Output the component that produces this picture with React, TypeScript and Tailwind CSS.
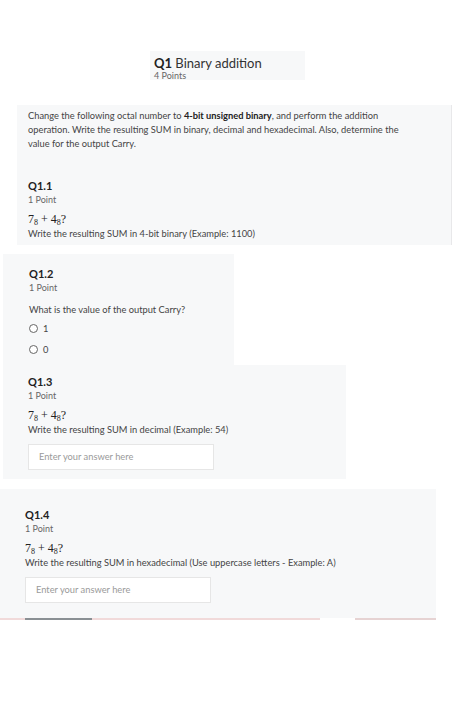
import React from 'react';

const font = { fontFamily: 'Lato, "Open Sans", sans-serif' };

const Math78 = () => (
  <div className="font-['Liberation_Serif',serif] text-[12px] leading-[16px] text-[#222]">
    7<sub className="text-[8px]">8</sub>&nbsp;+&nbsp;4<sub className="text-[8px]">8</sub>?
  </div>
);

const Heading = ({ label }: { label: string }) => (
  <>
    <div className="text-[11px] leading-[14px] font-bold text-[#222]">{label}</div>
    <div className="text-[9px] leading-[13px] text-[#666]">1 Point</div>
  </>
);

const AnswerInput = () => (
  <input
    type="text"
    placeholder="Enter your answer here"
    className="w-[186px] h-[26px] bg-white border border-[#e6e6e6] px-[10px] text-[9.3px] placeholder:text-[#9a9a9a] outline-none"
  />
);

const Radio = ({ label }: { label: string }) => (
  <div className="flex items-center gap-[5px] text-[9.3px] text-[#444]">
    <span className="w-[9px] h-[9px] rounded-full border border-[#666] bg-white" />
    <span>{label}</span>
  </div>
);

export default function App() {
  return (
    <div className="w-[474px] h-[719px] bg-white flex flex-col overflow-hidden" style={font}>
      {/* title */}
      <div className="mt-[51px] ml-[150px] w-[155px] h-[29px] bg-[#f7f8f9] overflow-hidden pl-[4px] pt-[4px]">
        <div className="text-[13px] leading-[16px] text-[#333]">
          <span className="font-bold text-[#222]">Q1</span> Binary addition
        </div>
        <div className="text-[9px] leading-[10px] text-[#666]">4 Points</div>
      </div>

      {/* Q1 intro + Q1.1 */}
      <div className="mt-[25px] ml-[17px] w-[435px] h-[140px] bg-[#f7f8f9] border-r border-[#e8e8ea] pl-[11px] pt-[4px]">
        <p className="text-[9.3px] leading-[14px] text-[#444]">
          Change the following octal number to <b className="text-[#222]">4-bit unsigned binary</b>, and perform the addition
          <br />
          operation. Write the resulting SUM in binary, decimal and hexadecimal. Also, determine the
          <br />
          value for the output Carry.
        </p>
        <div className="mt-[28px]">
          <Heading label="Q1.1" />
          <div className="mt-[5px]">
            <Math78 />
          </div>
          <div className="text-[9.3px] leading-[14px] text-[#444]">Write the resulting SUM in 4-bit binary (Example: 1100)</div>
        </div>
      </div>

      {/* Q1.2 */}
      <div className="mt-[9px] ml-[3px] w-[231px] h-[111px] bg-[#f7f8f9] pl-[26px] pt-[13px]">
        <Heading label="Q1.2" />
        <div className="mt-[9px] text-[9.3px] leading-[14px] text-[#444]">What is the value of the output Carry?</div>
        <div className="mt-[5px] flex flex-col gap-[7px]">
          <Radio label="1" />
          <Radio label="0" />
        </div>
      </div>

      {/* Q1.3 */}
      <div className="ml-[3px] w-[343px] h-[114px] bg-[#f7f8f9] pl-[25px] pt-[10px]">
        <Heading label="Q1.3" />
        <div className="mt-[5px]">
          <Math78 />
        </div>
        <div className="text-[9.3px] leading-[14px] text-[#444]">Write the resulting SUM in decimal (Example: 54)</div>
        <div className="mt-[5px]">
          <AnswerInput />
        </div>
      </div>

      {/* Q1.4 */}
      <div className="mt-[10px] w-[436px] h-[129px] bg-[#f7f8f9] pl-[25px] pt-[19px] flex flex-col">
        <Heading label="Q1.4" />
        <div className="mt-[5px]">
          <Math78 />
        </div>
        <div className="text-[9.3px] leading-[14px] text-[#444]">
          Write the resulting SUM in hexadecimal (Use uppercase letters - Example: A)
        </div>
        <div className="mt-[5px]">
          <AnswerInput />
        </div>
      </div>
      <div className="flex h-[2px] w-[436px]">
        <div className="w-[25px] bg-[#f1dada]" />
        <div className="w-[67px] bg-[#8a9094]" />
        <div className="w-[228px] bg-[#f1dada]" />
        <div className="w-[35px] bg-white" />
        <div className="w-[81px] bg-[#e6d3d3]" />
      </div>
    </div>
  );
}
